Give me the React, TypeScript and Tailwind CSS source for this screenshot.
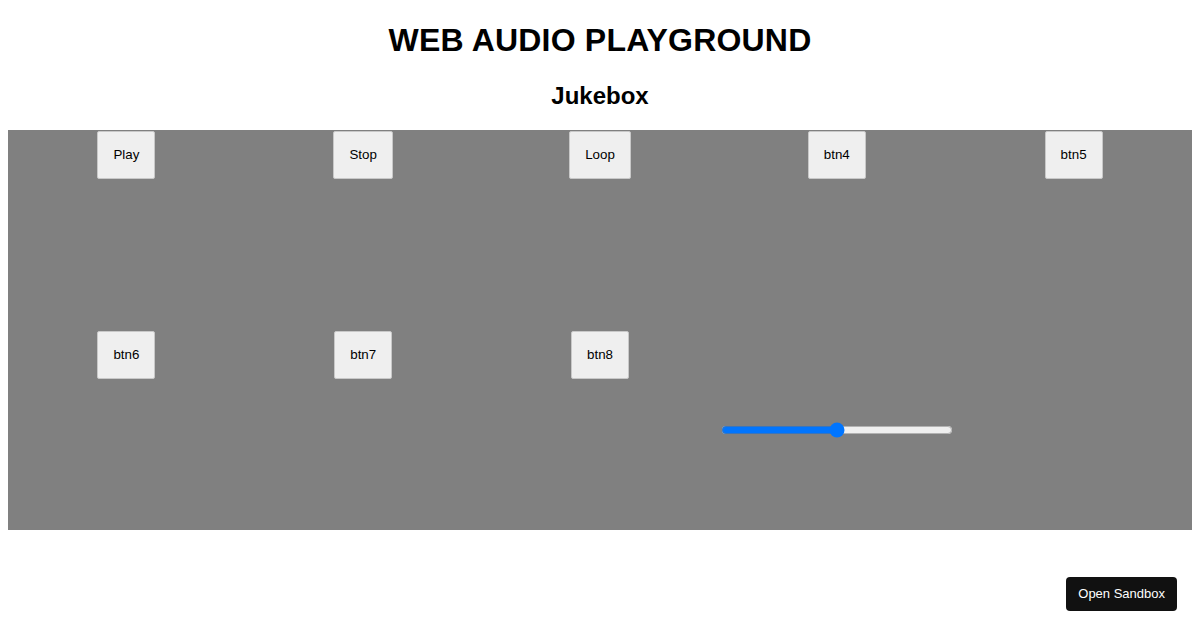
import React, { useState } from 'react';

const buttons = ['Play', 'Stop', 'Loop', 'btn4', 'btn5', 'btn6', 'btn7', 'btn8'];

const App: React.FC = () => {
  const [volume, setVolume] = useState(50);

  return (
    <div className="min-h-[630px] bg-white px-2 pt-px text-black font-['Liberation_Sans',Arial,sans-serif]">
      <h1 className="mt-[21px] text-center text-[32px] font-bold leading-[37px] tracking-[0.2px]">WEB AUDIO PLAYGROUND</h1>
      <h2 className="mt-[23px] mb-[20px] text-center text-[24px] font-bold leading-[28px]">Jukebox</h2>

      {/* Pads */}
      <section className="grid h-[400px] grid-cols-5 grid-rows-[200px_200px] bg-[#808080]">
        {buttons.map((label) => (
          <div key={label} className="flex justify-center pt-px">
            <button className="h-[48px] self-start rounded-[2px] border border-[#c8c8c8] bg-[#efefef] px-[15px] pb-px text-[13.33px] leading-[15px] text-black">
              {label}
            </button>
          </div>
        ))}
        <div className="flex items-center justify-center">
          <input
            type="range"
            min={0}
            max={100}
            value={volume}
            onChange={(e) => setVolume(Number(e.target.value))}
            className="w-[232px]"
          />
        </div>
      </section>

      <button className="fixed bottom-[19px] right-[23px] h-[34px] rounded-[4px] bg-[#111111] px-[12px] text-[13px] text-white">
        Open Sandbox
      </button>
    </div>
  );
};

export default App;
